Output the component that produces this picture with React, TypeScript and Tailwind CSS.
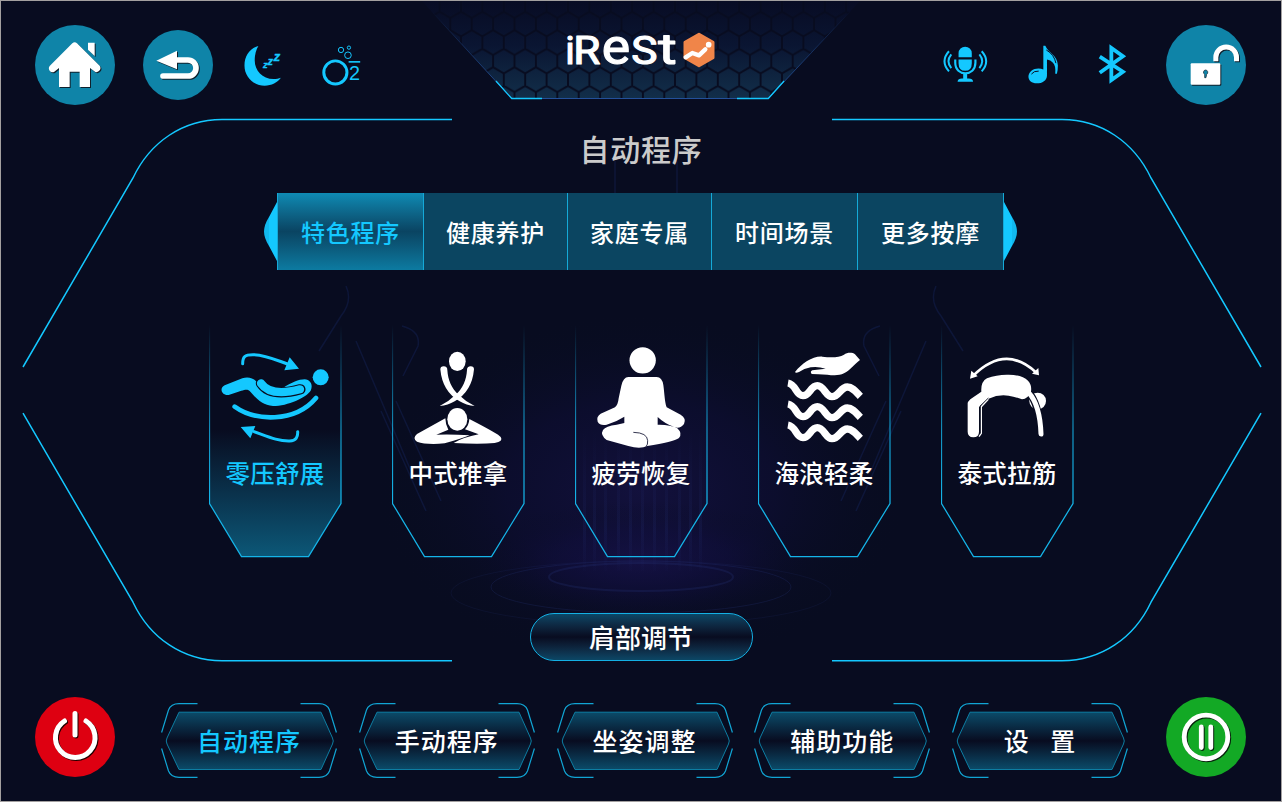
import { useState } from 'react';
import type { ReactNode } from 'react';
import clsx from 'clsx';

const CYAN = '#14c8ff';

const CATEGORIES = [
  { label: '特色程序', width: 'w-[146px]' },
  { label: '健康养护', width: 'w-[144px]' },
  { label: '家庭专属', width: 'w-[144px]' },
  { label: '时间场景', width: 'w-[146px]' },
  { label: '更多按摩', width: 'w-[146px]' },
];

const MENU = ['自动程序', '手动程序', '坐姿调整', '辅助功能', '设 置'];

const FRAME_CORNER = 'M451 118.5H221C182 118.5 149 141 132 177L22 366';

/* ---------- Backdrop ---------- */

function Backdrop() {
  return (
    <svg className="absolute inset-0 pointer-events-none" width="1280" height="800" viewBox="0 0 1280 800" fill="none" aria-hidden="true">
      <defs>
        <radialGradient id="glow">
          <stop offset="0" stopColor="#1a1450" stopOpacity="0.6" />
          <stop offset="0.5" stopColor="#120f42" stopOpacity="0.38" />
          <stop offset="1" stopColor="#080c20" stopOpacity="0" />
        </radialGradient>
        <linearGradient id="beam" x1="0" y1="0" x2="0" y2="1">
          <stop offset="0" stopColor="#2a3c8c" stopOpacity="0" />
          <stop offset="0.7" stopColor="#2a3c8c" stopOpacity="0.14" />
          <stop offset="1" stopColor="#2a3c8c" stopOpacity="0.02" />
        </linearGradient>
        <linearGradient id="badge" x1="0" y1="0" x2="0" y2="98" gradientUnits="userSpaceOnUse">
          <stop offset="0" stopColor="#080c24" />
          <stop offset="0.45" stopColor="#0a1532" />
          <stop offset="1" stopColor="#122f4a" />
        </linearGradient>
        <linearGradient id="badgeEdge" x1="0" y1="0" x2="0" y2="98" gradientUnits="userSpaceOnUse">
          <stop offset="0.1" stopColor="#23509a" stopOpacity="0" />
          <stop offset="1" stopColor="#23509a" />
        </linearGradient>
        <pattern id="comb" x="449.3" y="10.65" width="21.4" height="37.07" patternUnits="userSpaceOnUse">
          <path d="M10.7 0L21.4 6.18V18.53L10.7 24.7L0 18.53V6.18ZM10.7 24.7V37.07" stroke="#080c20" strokeWidth="2" />
        </pattern>
      </defs>

      {/* stage light */}
      <ellipse cx="640" cy="490" rx="270" ry="180" fill="url(#glow)" />
      <ellipse cx="640" cy="560" rx="180" ry="60" fill="url(#glow)" />
      {[582, 592, 603, 616, 628, 640, 652, 664, 677, 688, 698].map((x) => (
        <rect key={x} x={x} y="430" width="3" height="140" fill="url(#beam)" />
      ))}
      <g stroke="#26357a" opacity="0.25">
        <ellipse cx="640" cy="576" rx="92" ry="14" strokeWidth="2" />
        <ellipse cx="640" cy="586" rx="150" ry="26" />
        <ellipse cx="640" cy="592" rx="190" ry="32" opacity="0.6" />
      </g>
      {/* side pylons */}
      <g stroke="#1a2a6c" strokeWidth="1.5" opacity="0.32">
        <path d="M345 285Q352 300 340 315L318 350M401 325Q420 330 417 345L402 375M355 340L410 470M395 400L440 500M380 410L425 510" />
        <path d="M935 285Q928 300 940 315L962 350M879 325Q860 330 863 345L878 375M925 340L870 470M885 400L840 500M900 410L855 510" />
        <path d="M614 160V208M676 160V208" />
      </g>

      {/* logo badge */}
      <path d="M421 0L510.7 97.5H767.3L859 0Z" fill="url(#badge)" />
      <path d="M421 0L510.7 97.5H767.3L859 0Z" fill="url(#comb)" />
      <path d="M421 0L510.7 97.5H767.3L859 0" stroke="url(#badgeEdge)" />
      <path d="M495 80L510.7 97.5H541M736 97.5H767.3L783 80" stroke={CYAN} strokeWidth="1.3" />

      {/* outer frame */}
      <g stroke={CYAN} strokeWidth="1.5">
        <path d={FRAME_CORNER} />
        <path d={FRAME_CORNER} transform="translate(1282) scale(-1 1)" />
        <path d={FRAME_CORNER} transform="translate(0 778.2) scale(1 -1)" />
        <path d={FRAME_CORNER} transform="translate(1282 778.2) scale(-1 -1)" />
      </g>
    </svg>
  );
}

/* ---------- Header ---------- */

function RoundButton({ label, className, children }: { label: string; className: string; children: ReactNode }) {
  return (
    <button className={clsx('rounded-full shrink-0', className)} aria-label={label}>
      {children}
    </button>
  );
}

function Logo() {
  return (
    <svg className="absolute left-[559px] top-[11px] font-normal" width="164" height="77" viewBox="420 36 492 231" aria-label="iRest">
      <g fill="#fff" stroke="#fff" strokeWidth="3.5" strokeLinejoin="round" fontFamily="Roboto, sans-serif">
        <text transform="translate(436 192)" fontSize="117">i</text>
        <text transform="translate(460 192) scale(1.13 1)" fontSize="117">R</text>
        <text transform="translate(545 191) scale(1.07 1)" fontSize="150">e</text>
        <text transform="translate(634 191) scale(1.15 1)" fontSize="115">S</text>
        <text transform="translate(715 191) scale(1.35 1)" fontSize="125">t</text>
      </g>
      <path d="M837 103L879 127V173L837 197L795 173V127Z" fill="#f08549" stroke="#f08549" strokeWidth="9" strokeLinejoin="round" />
      <path d="M797 172L817 159L837 166L856 148" fill="none" stroke="#fff" strokeWidth="13" strokeLinecap="round" strokeLinejoin="round" />
      <circle cx="866" cy="134" r="8.5" fill="#fff" />
    </svg>
  );
}

function Header() {
  return (
    <header className="relative flex items-center h-[128px] pl-[34px] pr-[35px]">
      <RoundButton label="主页" className="size-20 bg-[#0f84a8]">
        <svg viewBox="46 45 240 240" fill="#fff" className="size-20 drop-shadow-[1px_1px_0_#10202c]">
          <path d="M158 100Q165 94 172 100L240 167Q245 174 240 181Q235 188 227 186L211 174V231H180V185H150V231H118V174L103 186Q95 189 90 182Q85 175 90 168Z" />
          <path d="M205 98H225V138L205 119Z" />
        </svg>
      </RoundButton>
      <RoundButton label="返回" className="ml-[28px] size-[70px] bg-[#0f84a8]">
        <svg viewBox="368 60 210 210" className="size-[70px] drop-shadow-[1px_1px_0_#10202c]">
          <path d="M408 152L470 122V178Z" fill="#fff" />
          <path d="M465 150H503A24 24 0 0 1 503 198H428" fill="none" stroke="#fff" strokeWidth="17" strokeLinecap="round" />
        </svg>
      </RoundButton>
      <svg className="ml-[30px] overflow-visible" width="40" height="43" viewBox="670 100 120 130" fill={CYAN}>
        <path d="M716 106C690 112 674 136 674 165C674 200 702 226 735 226C756 226 774 216 784 202C778 204 770 206 762 206C728 206 705 180 705 150C705 132 709 117 716 106Z" />
        <g fontFamily="Liberation Sans, sans-serif" fontWeight="bold" fontStyle="italic" stroke={CYAN} strokeWidth="1">
          <text x="730" y="172" fontSize="28">z</text>
          <text x="744" y="163" fontSize="33">z</text>
          <text x="762" y="152" fontSize="41">z</text>
        </g>
      </svg>
      <svg className="ml-[38px] overflow-visible" width="40" height="43" viewBox="905 100 120 130" fill="none" stroke={CYAN}>
        <circle cx="948" cy="186" r="35" strokeWidth="9" />
        <circle cx="965" cy="118" r="8" strokeWidth="3" />
        <circle cx="989" cy="111" r="5" strokeWidth="3" />
        <circle cx="986" cy="134" r="10" strokeWidth="3" />
        <path d="M988 154H1023" strokeWidth="5" />
        <text x="989" y="210" fontSize="60" fill={CYAN} stroke="none" fontFamily="Liberation Sans, sans-serif">2</text>
      </svg>

      <Logo />

      <svg className="ml-auto" width="47" height="43" viewBox="65 100 140 130" fill="none" stroke={CYAN}>
        <path d="M114 140V128A20 20 0 0 1 154 128V140ZM114 147H154V158Q154 181 134 181Q114 181 114 158Z" fill={CYAN} stroke="none" />
        <path d="M104 147V157C104 199 165 199 165 157V147" strokeWidth="6.5" />
        <path d="M111 214Q112 204 124 204H128V190H140V204H145Q157 204 158 214Z" fill={CYAN} stroke="none" />
        <path d="M85 122Q58 152 85 183M92 131Q75 152 92 173M184 122Q211 152 184 183M177 131Q194 152 177 173" strokeWidth="6" />
      </svg>
      <svg className="ml-[38px]" width="32" height="43" viewBox="320 100 96 130" fill={CYAN}>
        <path d="M369 105H375C384 128 412 132 413 165Q413 180 410 190L405 190Q407 165 398 157Q391 148 380 147V195C380 210 366 219 349 219C334 219 324 210 324 199C324 184 338 174 354 174Q363 174 369 177Z" />
        <path d="M378 118Q402 132 407 158M333 191Q340 181 355 182" fill="none" stroke="#080c20" strokeWidth="3" />
      </svg>
      <svg className="ml-[39px]" width="29" height="43" viewBox="535 100 87 130" fill="none" stroke={CYAN} strokeWidth="11.5">
        <path d="M540 138L610 184L575 209V112L610 137L540 187" />
      </svg>
      <RoundButton label="解锁" className="ml-[39px] size-20 bg-[#0f84a8]">
        <svg viewBox="740 45 240 240" className="size-20 drop-shadow-[1px_1px_0_#10202c]">
          <rect x="814" y="160" width="89" height="64" rx="3" fill="#fff" />
          <path d="M889.5 154V142A31 31 0 0 1 951.5 142V154" fill="none" stroke="#fff" strokeWidth="15" />
          <path d="M858 180A7 7 0 0 1 862 193L860 203H856V193A7 7 0 0 1 858 180Z" fill="#0f84a8" stroke="#10202c" strokeWidth="2" />
        </svg>
      </RoundButton>
    </header>
  );
}

/* ---------- Category tabs ---------- */

function TabCap({ flip }: { flip?: boolean }) {
  return (
    <svg width="13" height="59" viewBox="0 0 13 59" className={clsx(flip && '-scale-x-100')} aria-hidden="true">
      <path d="M13 0V59L5 44V15Z" fill={CYAN} />
      <path d="M5 15V44Q0 36 0 29.5Q0 23 5 15Z" fill="#12b9ee" />
    </svg>
  );
}

function CategoryTabs() {
  const [active, setActive] = useState('特色程序');
  return (
    <div className="flex items-center justify-center pr-px">
      <TabCap />
      <div className="flex h-[77px] border-l border-[#15a9d8]">
        {CATEGORIES.map((c) => (
          <button
            key={c.label}
            onClick={() => setActive(c.label)}
            className={clsx(
              'h-full border-r border-[#15a9d8] text-2xl tracking-[0.7px]',
              c.width,
              active === c.label
                ? 'text-[#14c8ff] bg-linear-to-b from-[#0f8bb4] via-[#0a4462] to-[#0c7ba1]'
                : 'text-white bg-[#0b4561]',
            )}
          >
            {c.label}
          </button>
        ))}
      </div>
      <TabCap flip />
    </div>
  );
}

/* ---------- Program cards ---------- */

const ZeroPressureIcon = (
  <svg width="132" height="100" viewBox="43 75 396 300" fill="none" stroke={CYAN} strokeLinecap="round">
    <path d="M144 131C144 110 150 104 175 104C210 104 240 118 278 132" strokeWidth="9" />
    <path d="M285 112L313 146L269 151ZM138 321L182 318L167 355Z" fill={CYAN} stroke="none" />
    <path
      d="M90 196L143 175C165 168 182 178 192 192C215 212 250 212 290 200L268 202C290 188 312 178 330 178C350 180 355 197 348 212C335 232 280 258 235 258C200 256 180 230 165 213C158 206 150 210 140 212L102 225C82 228 72 205 90 196Z"
      fill={CYAN}
      stroke="none"
    />
    <path d="M199 190C222 224 270 221 317 208" stroke="#080c20" strokeWidth="31" />
    <path d="M199 190C222 223 270 220 316 208" strokeWidth="25" />
    <circle cx="378" cy="172" r="24" fill={CYAN} stroke="none" />
    <path d="M120 260C180 303 300 310 364 234" strokeWidth="14" />
    <path d="M178 335C220 350 250 364 285 363C305 362 310 350 309 335" strokeWidth="9" />
  </svg>
);

const TuinaIcon = (
  <svg width="132" height="100" viewBox="37 75 396 300" fill="#fff">
    <ellipse cx="233" cy="124" rx="25" ry="29" />
    <path d="M182 148Q182 139 192 139Q203 139 203 150C205 180 215 205 238 225Q258 245 285 258Q260 256 240 244Q188 215 182 148Z" />
    <path d="M182 148Q182 139 192 139Q203 139 203 150C205 180 215 205 238 225Q258 245 285 258Q260 256 240 244Q188 215 182 148Z" transform="translate(465) scale(-1 1)" />
    <ellipse cx="233" cy="298" rx="30" ry="34" />
    <path d="M197 295L112 342Q97 355 112 365Q140 375 195 370Q240 358 270 346Q215 342 170 344L206 329Q197 312 197 295Z" />
    <path d="M269 297Q268 315 256 328L297 343Q250 352 222 369Q300 373 345 369Q372 364 363 351Q358 343 269 297Z" />
  </svg>
);

const MeditateIcon = (
  <svg width="132" height="100" viewBox="45 75 396 300" fill="#fff" className="overflow-visible">
    <circle cx="248" cy="121" r="39.5" />
    <path d="M205 171H290Q306 171 310 195C314 225 314 245 320 262L362 284Q380 295 372 312Q362 326 345 322Q315 312 293 291V314Q330 313 352 325Q368 340 357 354Q340 366 262 378Q240 388 205 378L140 360Q120 345 129 330Q137 318 170 314Q185 311 193 309V290Q170 305 140 314Q120 318 113 305Q108 290 122 281L165 262Q174 255 176 235L184 197Q190 171 205 171Z" />
    <path d="M220 337Q262 338 263 362Q264 374 258 380" fill="none" stroke="#0b0d2c" strokeWidth="2.5" />
  </svg>
);

const WAVE = 'M127 189C152 193 150 227 172 227C192 227 195 197 215 197C235 197 240 230 259 230C280 230 285 201 305 201C322 201 332 217 344 229';

const WavesIcon = (
  <svg width="132" height="100" viewBox="37 75 396 300" fill="none">
    <path
      d="M148 156C170 130 200 108 230 110C260 113 280 112 295 104C305 97 320 97 328 103L343 120C325 133 315 150 295 160C280 168 260 166 245 164Q215 162 198 162Q192 155 200 151L240 146Q215 138 195 142Q175 146 160 156Q150 160 148 156Z"
      fill="#fff"
    />
    <g stroke="#fff" strokeWidth="22">
      <path d={WAVE} />
      <path d={WAVE} transform="translate(0 63)" />
      <path d={WAVE} transform="translate(0 126)" />
    </g>
  </svg>
);

const ThaiStretchIcon = (
  <svg width="132" height="100" viewBox="47 75 396 300" fill="#fff">
    <path d="M143 168Q240 71 333 158" fill="none" stroke="#fff" strokeWidth="8" />
    <path d="M134 176L138 152L157 169ZM341 166L339 144L320 161Z" />
    <circle cx="337" cy="243" r="25" />
    <path d="M305 210Q342 250 347 342" fill="none" stroke="#080c20" strokeWidth="22" />
    <path d="M168 215Q166 185 185 175Q215 163 250 164Q290 165 308 182Q320 195 317 215Q308 236 290 238Q270 230 250 227Q220 222 190 236L161 262V335Q161 352 144 352Q127 351 127 335V250Q127 246 135 238Z" />
    <path d="M189 238L168 260V340L161 350" fill="none" stroke="#fff" strokeWidth="4" />
    <path d="M189 234L164 258V340" fill="none" stroke="#080c20" strokeWidth="2.5" />
    <path d="M310 218Q344 255 347 342" fill="none" stroke="#fff" strokeWidth="15" strokeLinecap="round" />
  </svg>
);

const PROGRAMS = [
  { name: '零压舒展', icon: ZeroPressureIcon },
  { name: '中式推拿', icon: TuinaIcon },
  { name: '疲劳恢复', icon: MeditateIcon },
  { name: '海浪轻柔', icon: WavesIcon },
  { name: '泰式拉筋', icon: ThaiStretchIcon },
];

function CardOutline({ filled }: { filled: boolean }) {
  return (
    <svg className="absolute inset-0" width="133" height="233" viewBox="0 0 133 233" fill="none" aria-hidden="true">
      <defs>
        <linearGradient id="cardEdge" x1="0" y1="0" x2="0" y2="233" gradientUnits="userSpaceOnUse">
          <stop offset="0" stopColor="#14b0e4" stopOpacity="0" />
          <stop offset="0.45" stopColor="#14b0e4" stopOpacity="0.8" />
          <stop offset="0.75" stopColor="#14b4e8" />
        </linearGradient>
        <linearGradient id="cardFill" x1="0" y1="0" x2="0" y2="233" gradientUnits="userSpaceOnUse">
          <stop offset="0.45" stopColor="#0c5878" stopOpacity="0" />
          <stop offset="1" stopColor="#0c5878" />
        </linearGradient>
      </defs>
      <path d="M0.5 0V178.5L32.5 231.5H99.5L132 178.5V0" fill={filled ? 'url(#cardFill)' : 'none'} stroke="url(#cardEdge)" strokeWidth="1.25" />
    </svg>
  );
}

function ProgramCards() {
  const [selected, setSelected] = useState('零压舒展');
  return (
    <div className="mx-auto mt-[55px] flex justify-between w-[864px]">
      {PROGRAMS.map((p) => (
        <button
          key={p.name}
          onClick={() => setSelected(p.name)}
          className={clsx('relative flex flex-col items-center w-[132px] h-[233px] pt-5', selected === p.name ? 'text-[#14c8ff]' : 'text-white')}
        >
          <CardOutline filled={selected === p.name} />
          <span className="relative">{p.icon}</span>
          <span className="relative mt-[10px] text-[24.5px] leading-9 tracking-[0.3px]">{p.name}</span>
        </button>
      ))}
    </div>
  );
}

/* ---------- Bottom bar ---------- */

function MenuButton({ label, active, onClick }: { label: string; active: boolean; onClick: () => void }) {
  const bracket = 'M36.5 0.7H18Q10 0.7 7.5 7L0.6 29.5';
  return (
    <button onClick={onClick} className={clsx('relative w-[176px] h-[75px] text-[25px] tracking-[1px]', active ? 'text-[#14c8ff]' : 'text-white')}>
      <svg className="absolute inset-0" width="176" height="75" viewBox="0 0 176 75" fill="none" aria-hidden="true">
        <defs>
          <linearGradient id="menuFill" x1="0" y1="0" x2="0" y2="1">
            <stop offset="0" stopColor="#0b4b69" />
            <stop offset="0.5" stopColor="#080c20" />
            <stop offset="1" stopColor="#0b4b69" />
          </linearGradient>
        </defs>
        <g stroke="#11a5d4" strokeWidth="1.2">
          <path d={bracket} />
          <path d={bracket} transform="translate(176) scale(-1 1)" />
          <path d={bracket} transform="translate(0 75) scale(1 -1)" />
          <path d={bracket} transform="translate(176 75) scale(-1 -1)" />
        </g>
        <path d="M18 9.2H160L171.5 35Q173 38 171.5 41L160 66.5H18L6 41Q4.5 38 6 35Z" fill="url(#menuFill)" stroke="#0d7da2" />
      </svg>
      <span className={clsx('relative', label === '设 置' && '[word-spacing:14px]')}>{label}</span>
    </button>
  );
}

function BottomBar() {
  const [page, setPage] = useState('自动程序');
  return (
    <footer className="flex items-center h-20 mt-[36px] pl-[34px] pr-[35px]">
      <RoundButton label="电源" className="size-20 bg-[#de0011]">
        <svg viewBox="0 0 80 80" fill="none" stroke="#fff" strokeWidth="5" strokeLinecap="round" className="size-20 drop-shadow-[1px_1.5px_0_#200000]">
          <path d="M29.5 24A19.8 19.8 0 1 0 51 24M40 16.5V38" />
        </svg>
      </RoundButton>
      <nav className="flex justify-between w-[967px] ml-[46px] mt-[7px]">
        {MENU.map((m) => (
          <MenuButton key={m} label={m} active={page === m} onClick={() => setPage(m)} />
        ))}
      </nav>
      <RoundButton label="暂停" className="ml-auto size-20 bg-[#13a925]">
        <svg viewBox="0 0 80 80" fill="none" stroke="#fff" strokeWidth="4.8" strokeLinecap="round" className="size-20 drop-shadow-[1px_1.5px_0_#06200a]">
          <circle cx="40" cy="40" r="21.8" />
          <path d="M35.3 30V50.5M44.8 30V50.5" />
        </svg>
      </RoundButton>
    </footer>
  );
}

export default function App() {
  return (
    <div className="relative w-[1282px] h-[802px] overflow-hidden border border-[#a3a0a0] bg-[#080c20] font-medium font-['Noto_Sans_CJK_SC',sans-serif]">
      <Backdrop />
      <div className="relative">
        <Header />
        <main className="flex flex-col">
          <h1 className="h-16 text-center text-[30px] leading-[38px] tracking-[0.8px] text-[#cbcbcb]">自动程序</h1>
          <CategoryTabs />
          <ProgramCards />
          <button className="mx-auto mt-[55px] w-[223px] h-12 rounded-full border border-[#14b0e4] bg-linear-to-b from-[#0b4766] via-[#080c20] to-[#0b4766] text-[26px] leading-none text-white">
            肩部调节
          </button>
        </main>
        <BottomBar />
      </div>
    </div>
  );
}
